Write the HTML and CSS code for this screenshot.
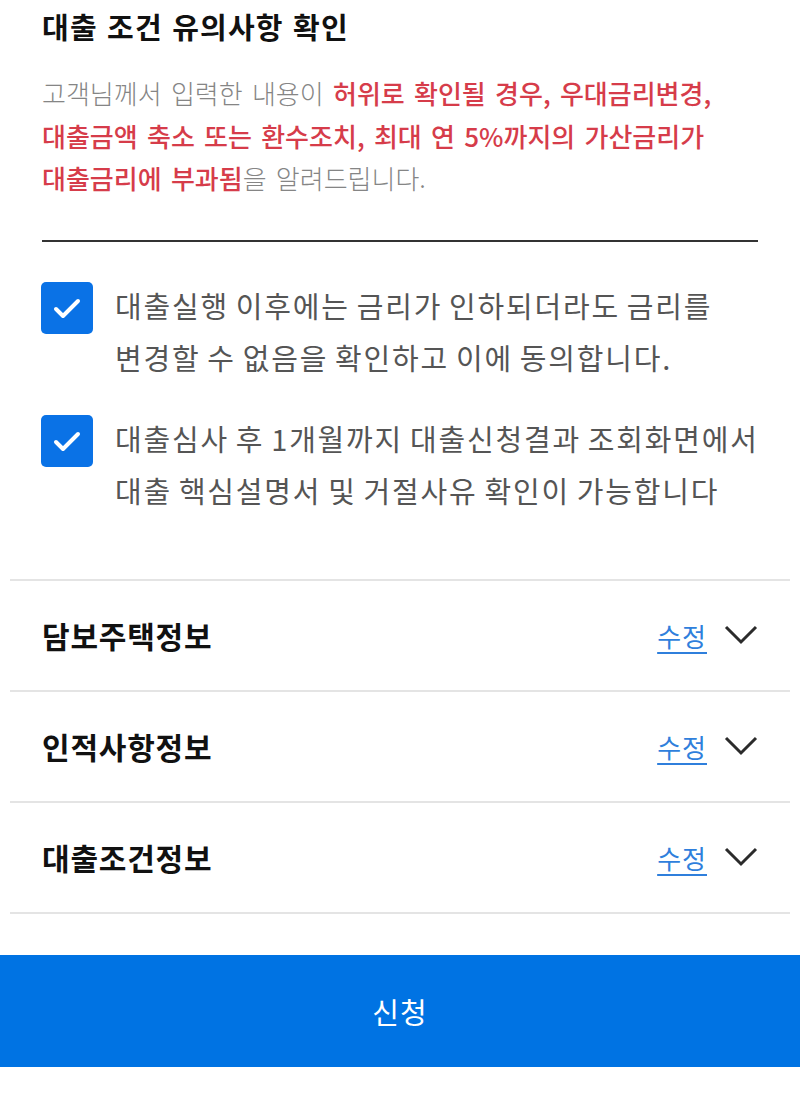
FILE: index.html
```html
<!DOCTYPE html>
<html lang="ko">
<head>
<meta charset="utf-8">
<link rel="stylesheet" href="styles.css">
</head>
<body>
<section class="notice">
  <h1 class="notice-title">대출 조건 유의사항 확인</h1>
  <p class="notice-text">고객님께서 입력한 내용이 <strong class="warn">허위로 확인될 경우, 우대금리변경,<br>대출금액 축소 또는 환수조치, 최대 연 5%까지의 가산금리가<br>대출금리에 부과됨</strong>을 알려드립니다.</p>
  <hr class="notice-rule">
  <ul class="checks">
    <li class="check-item">
      <span class="checkbox"><svg viewBox="0 0 52 52" width="52" height="52"><polyline points="15,27 22,34 37,19" fill="none" stroke="#fff" stroke-width="4" stroke-linecap="round" stroke-linejoin="round"/></svg></span>
      <span class="check-text">대출실행 이후에는 금리가 인하되더라도 금리를<br>변경할 수 없음을 확인하고 이에 동의합니다.</span>
    </li>
    <li class="check-item">
      <span class="checkbox"><svg viewBox="0 0 52 52" width="52" height="52"><polyline points="15,27 22,34 37,19" fill="none" stroke="#fff" stroke-width="4" stroke-linecap="round" stroke-linejoin="round"/></svg></span>
      <span class="check-text">대출심사 후 1개월까지 대출신청결과 조회화면에서<br>대출 핵심설명서 및 거절사유 확인이 가능합니다</span>
    </li>
  </ul>
</section>
<div class="accordion">
  <div class="acc-row">
    <span class="acc-title">담보주택정보</span>
    <a class="acc-edit" href="#">수정</a>
    <svg class="chev" viewBox="0 0 34 20" width="34" height="20"><polyline points="2,2 17,17 32,2" fill="none" stroke="#2b2b2b" stroke-width="3"/></svg>
  </div>
  <div class="acc-row">
    <span class="acc-title">인적사항정보</span>
    <a class="acc-edit" href="#">수정</a>
    <svg class="chev" viewBox="0 0 34 20" width="34" height="20"><polyline points="2,2 17,17 32,2" fill="none" stroke="#2b2b2b" stroke-width="3"/></svg>
  </div>
  <div class="acc-row">
    <span class="acc-title">대출조건정보</span>
    <a class="acc-edit" href="#">수정</a>
    <svg class="chev" viewBox="0 0 34 20" width="34" height="20"><polyline points="2,2 17,17 32,2" fill="none" stroke="#2b2b2b" stroke-width="3"/></svg>
  </div>
</div>
<button class="submit" type="button">신청</button>
</body>
</html>
```
FILE: styles.css
```css
html, body {
  margin: 0;
  padding: 0;
  background: #fff;
}
body {
  font-family: "Noto Sans CJK KR", "Noto Sans", sans-serif;
  width: 800px;
}
.notice {
  padding: 0 42px;
}
.notice-title {
  margin: 0;
  padding-top: 6px;
  font-size: 29px;
  line-height: 40px;
  font-weight: 700;
  letter-spacing: 1.2px;
  color: #111;
}
.notice-text {
  margin: 26px 0 0;
  font-size: 26px;
  line-height: 42.5px;
  letter-spacing: 0;
  word-spacing: 2px;
  font-weight: 300;
  color: #858585;
  white-space: nowrap;
}
.warn {
  font-weight: 500;
  color: #d63c4a;
}
.notice-rule {
  margin: 40px 0 0;
  border: 0;
  height: 2px;
  background: #333;
}
.checks {
  list-style: none;
  margin: 0;
  padding: 37px 0 0;
  display: flex;
  flex-direction: column;
  gap: 29px;
}
.check-item {
  display: flex;
  gap: 22px;
  align-items: flex-start;
}
.checkbox {
  flex: none;
  width: 52px;
  height: 52px;
  margin-top: 3px;
  margin-left: -1px;
  border-radius: 5px;
  background: #0a72e6;
  display: flex;
}
.check-text {
  font-size: 29px;
  line-height: 52px;
  letter-spacing: 1.8px;
  word-spacing: -3px;
  color: #555;
  white-space: nowrap;
}
.accordion {
  margin: 63px 10px 0;
  border-top: 2px solid #e4e4e4;
}
.acc-row {
  display: flex;
  align-items: center;
  height: 109px;
  padding: 0 32px 0 32px;
  border-bottom: 2px solid #e4e4e4;
}
.acc-title {
  flex: 1;
  font-size: 30px;
  font-weight: 700;
  letter-spacing: 0.8px;
  color: #111;
}
.acc-edit {
  font-size: 26px;
  letter-spacing: 1px;
  color: #2f7fdc;
  text-decoration: underline;
  text-underline-offset: 5px;
  margin-right: 17px;
}
.chev {
  display: block;
}
.submit {
  display: block;
  width: 100%;
  height: 112px;
  margin-top: 41px;
  border: 0;
  background: #0073e3;
  color: #fff;
  font-family: inherit;
  font-size: 29px;
  font-weight: 400;
  letter-spacing: 1px;
}
```
